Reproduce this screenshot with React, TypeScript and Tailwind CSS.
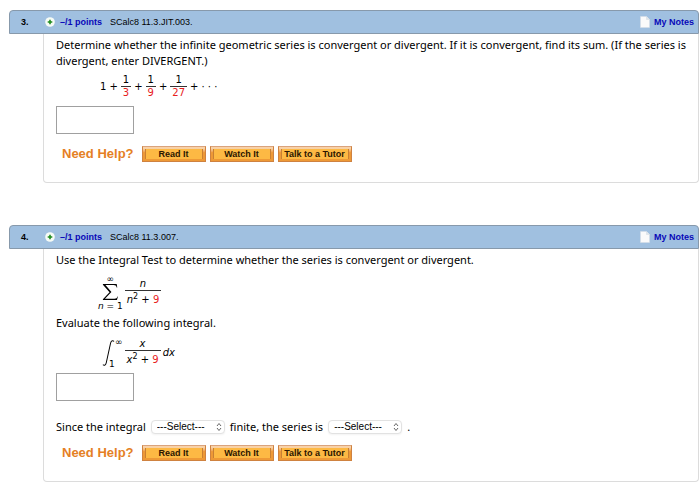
import type { ReactNode } from 'react'

interface QuestionProps {
  number: number
  code: string
  children: ReactNode
}

function Question({ number, code, children }: QuestionProps) {
  return (
    <section>
      <header className="flex h-6 items-center rounded-t border border-[#8799ab] bg-[#a0c0e0] pr-1 pl-[11px] font-['Liberation_Sans',sans-serif] text-[9px] text-black">
        <span className="w-6 font-bold">{number}.</span>
        <button type="button" aria-label="Show points details" className="size-[10px]">
          <svg viewBox="0 0 10 10" className="size-[10px]">
            <circle cx="5" cy="5" r="4.8" fill="#f6fbf6" />
            <path d="M5 2.700v4.600M2.700 5h4.600" stroke="#1d8a1d" strokeWidth="1.6" />
          </svg>
        </button>
        <a href="#points" className="ml-[5px] font-bold text-[#0808b8]">
          –/1 points
        </a>
        <span className="ml-2">{code}</span>
        <a href="#notes" className="ml-auto flex items-center gap-1 font-bold text-[#0808b8]">
          <svg viewBox="0 0 10 12" className="h-3 w-[10px]">
            <path d="M.5.5h6l3 3v8h-9z" fill="#fafafa" stroke="#d5dde5" strokeWidth="0.6" />
            <path d="M6.5.5v3h3" fill="#dfe5ea" stroke="#d5dde5" strokeWidth="0.6" />
          </svg>
          My Notes
        </a>
      </header>
      <div className="ml-[34px] rounded-b border border-t-0 border-[#dcdcdc] pt-[3px] pr-2 pb-5 pl-3">{children}</div>
    </section>
  )
}

interface FractionProps {
  top: ReactNode
  bottom: ReactNode
  tall?: boolean
}

function Fraction({ top, bottom, tall }: FractionProps) {
  return (
    <span className="inline-flex flex-col text-center leading-3">
      <span className="border-b border-[#333] px-[2px]">{top}</span>
      <span className={tall ? 'px-[2px] leading-[18px]' : 'px-[2px]'}>{bottom}</span>
    </span>
  )
}

function Red({ children }: { children: ReactNode }) {
  return <span className="text-[#e8201c]">{children}</span>
}

function Squared({ name }: { name: string }) {
  return (
    <>
      <i>{name}</i>
      <sup className="text-[8px]">2</sup>
    </>
  )
}

function Answer({ label }: { label: string }) {
  return <input type="text" aria-label={label} className="block h-7 w-[78px] border border-[#a0a0a0] bg-white px-1" />
}

function HelpButton({ children, wide }: { children: ReactNode; wide?: boolean }) {
  return (
    <button
      type="button"
      className={`${wide ? 'w-[74px]' : 'w-16'} h-4 border border-[#cf8240] border-t-[#dba37c] bg-[#f0a040] bg-linear-to-b from-[#f8d2a8] from-10% to-[#ee9936] to-40% px-[2px] pt-[2px] pb-[2px] text-[9px] font-bold text-[#2b1600]`}
    >
      <span className="flex h-full items-center justify-center border-x border-[#c98033] bg-[#fdb944] whitespace-nowrap">
        {children}
      </span>
    </button>
  )
}

function NeedHelp() {
  return (
    <div className="flex h-4 items-center gap-1 pl-[6px] font-['Liberation_Sans',sans-serif]">
      <span className="mr-1 text-[13px] font-bold text-[#e58024]">Need Help?</span>
      <HelpButton>Read It</HelpButton>
      <HelpButton>Watch It</HelpButton>
      <HelpButton wide>Talk to a Tutor</HelpButton>
    </div>
  )
}

function Choice({ label, options }: { label: string; options: string[] }) {
  return (
    <span className="relative inline-flex">
      <select
        aria-label={label}
        className="h-[14px] w-[74px] appearance-none rounded border border-[#e2e2e2] bg-white pl-[5px] font-['Liberation_Sans',sans-serif] text-[10px] leading-3 shadow-xs"
      >
        <option>---Select---</option>
        {options.map((option) => (
          <option key={option}>{option}</option>
        ))}
      </select>
      <svg viewBox="0 0 6 10" className="pointer-events-none absolute top-[2px] right-[3px] h-[10px] w-[6px]">
        <path d="M1 4l2-2.500L5 4M1 6l2 2.500L5 6" fill="none" stroke="#555" strokeWidth="0.9" />
      </svg>
    </span>
  )
}

export default function App() {
  return (
    <main className="flex flex-col gap-[42px] bg-white pt-[10px] pr-px pl-[9px] font-['Noto_Sans',sans-serif] text-[11px] leading-4 text-black">
      <Question number={3} code="SCalc8 11.3.JIT.003.">
        <p>
          Determine whether the infinite geometric series is convergent or divergent. If it is convergent, find its sum.
          (If the series is divergent, enter DIVERGENT.)
        </p>
        <div className="mt-[5px] mb-[7px] flex items-center gap-[3px] pl-11 font-['DejaVu_Sans',sans-serif] text-[10px]">
          <span>1</span>
          <span>+</span>
          <Fraction top="1" bottom={<Red>3</Red>} />
          <span>+</span>
          <Fraction top="1" bottom={<Red>9</Red>} />
          <span>+</span>
          <Fraction top="1" bottom={<Red>27</Red>} />
          <span>+</span>
          <span>· · ·</span>
        </div>
        <Answer label="Sum of the series" />
        <div className="mt-3">
          <NeedHelp />
        </div>
      </Question>

      <Question number={4} code="SCalc8 11.3.007.">
        <p>Use the Integral Test to determine whether the series is convergent or divergent.</p>
        <div className="mt-[7px] mb-1 flex h-9 items-center gap-[2px] pl-[42px] font-['DejaVu_Sans',sans-serif] text-[10px]">
          <span className="flex flex-col items-center text-[9px]">
            <span className="leading-2">∞</span>
            <svg viewBox="0 0 18 20" className="h-[18px] w-4">
              <path d="M1 1h15.500l.7 4h-.7c-.5-2-1.300-2.800-3.500-2.800H3.900l6.700 7.800L3.300 17.600H14c2 0 2.800-.8 3.500-2.500h.5L16.800 19H1v-.8l7.500-8L1 1.800z" />
            </svg>
            <span className="leading-[10px]">
              <i>n</i> = 1
            </span>
          </span>
          <Fraction
            tall
            top={<i>n</i>}
            bottom={
              <>
                <Squared name="n" /> + <Red>9</Red>
              </>
            }
          />
        </div>
        <p>Evaluate the following integral.</p>
        <div className="mt-[6px] mb-1 flex h-8 items-center gap-[2px] pl-[46px] font-['DejaVu_Sans',sans-serif] text-[10px]">
          <span className="flex h-[30px] text-[9px]">
            <svg viewBox="0 0 14 30" className="h-[30px] w-[13px]">
              <path
                d="M1 27.500c1.500 1.500 3 .5 3.600-2L9.200 4.500c.6-2.500 2-3.500 3.800-2"
                fill="none"
                stroke="#000"
                strokeWidth="1.100"
              />
            </svg>
            <span className="flex flex-col justify-between leading-2">
              <span>∞</span>
              <span className="-ml-[6px]">1</span>
            </span>
          </span>
          <Fraction
            tall
            top={<i>x</i>}
            bottom={
              <>
                <Squared name="x" /> + <Red>9</Red>
              </>
            }
          />
          <i>dx</i>
        </div>
        <Answer label="Value of the integral" />
        <div className="mt-[18px] mb-[10px] flex items-center gap-[5px]">
          <span>Since the integral</span>
          <Choice label="The integral is" options={['is', 'is not']} />
          <span>finite, the series is</span>
          <Choice label="The series is" options={['convergent', 'divergent']} />
          <span>.</span>
        </div>
        <NeedHelp />
      </Question>
    </main>
  )
}
